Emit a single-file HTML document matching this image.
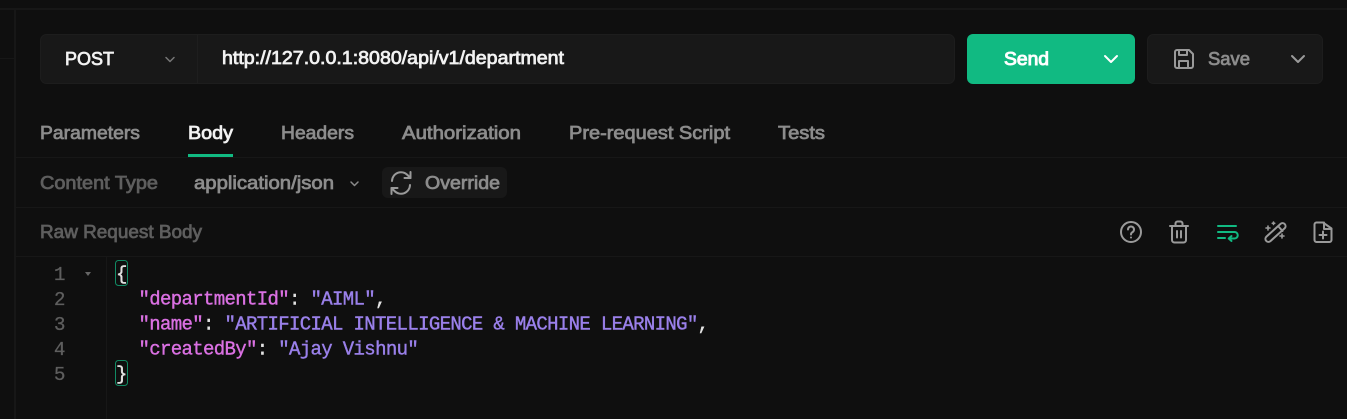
<!DOCTYPE html>
<html><head><meta charset="utf-8"><title>Request</title>
<style>
html,body{margin:0;padding:0;background:#0f0f0f;width:1347px;height:419px;overflow:hidden}
svg{display:block}
text{font-family:"Liberation Sans",sans-serif;font-size:18px}
.b{font-weight:400;stroke-width:.75px}
.m{font-family:"Liberation Mono",monospace;font-size:19px;letter-spacing:-.65px;stroke-width:.4px}
.ln{fill:#5e5e5e;font-family:"Liberation Mono",monospace;font-size:19px;stroke:#5e5e5e;stroke-width:.3px}
.k{fill:#da70e2;stroke:#da70e2}.s{fill:#9a80ea;stroke:#9a80ea}.p{fill:#e2e2e2;stroke:#e2e2e2}
.w{fill:#f2f2f2;stroke:#f2f2f2}.g{fill:#8c8c8c;stroke:#8c8c8c}.d{fill:#5e5e5e;stroke:#5e5e5e}
.i{fill:none;stroke:#9a9a9a;stroke-width:2;stroke-linecap:round;stroke-linejoin:round}
</style></head><body>
<svg width="1347" height="419" viewBox="0 0 1347 419" xmlns="http://www.w3.org/2000/svg">
<rect width="1347" height="419" fill="#0f0f0f"/>
<rect y="8" width="1347" height="2" fill="#171717"/>
<rect x="14" y="10" width="2" height="409" fill="#171717"/>
<rect y="58" width="14" height="1" fill="#171717"/>
<rect x="16" y="157" width="1331" height="1" fill="#171717"/>
<rect x="16" y="207" width="1331" height="1" fill="#171717"/>
<rect x="16" y="256" width="1331" height="1" fill="#171717"/>
<rect x="106" y="257" width="1" height="162" fill="#171717"/>

<rect x="40.500" y="34.500" width="914" height="49" rx="6" fill="#181818" stroke="#1d1d1d"/>
<rect x="197" y="35" width="1" height="48" fill="#1e1e1e"/>
<text x="65" y="65" class="b w" textLength="49" lengthAdjust="spacingAndGlyphs">POST</text>
<path d="M166 57.500l4 4 4-4" fill="none" stroke="#777" stroke-width="1.500" stroke-linecap="round" stroke-linejoin="round"/>
<text x="222" y="64" class="b w" textLength="342" lengthAdjust="spacingAndGlyphs">http://127.0.0.1:8080/api/v1/department</text>

<rect x="967" y="34" width="168" height="50" rx="6" fill="#11ba82"/>
<text x="1004" y="65" class="b" fill="#fff" stroke="#fff" style="stroke-width:.95px" textLength="45" lengthAdjust="spacingAndGlyphs">Send</text>
<path d="M1105 56l6 6 6-6" fill="none" stroke="#fff" stroke-width="2" stroke-linecap="round" stroke-linejoin="round"/>

<rect x="1147.500" y="34.500" width="175" height="49" rx="6" fill="#181818" stroke="#1d1d1d"/>
<g class="i"><path d="M1177 50h12l4 4v12a2 2 0 0 1-2 2h-14a2 2 0 0 1-2-2V52a2 2 0 0 1 2-2z"/><path d="M1179 50v5h8v-5"/><path d="M1179 68v-7h9v7"/></g>
<text x="1208" y="65" class="b g" textLength="42" lengthAdjust="spacingAndGlyphs">Save</text>
<path d="M1292 56l6 6 6-6" fill="none" stroke="#9a9a9a" stroke-width="2" stroke-linecap="round" stroke-linejoin="round"/>

<text x="40" y="139" class="b g" textLength="100" lengthAdjust="spacingAndGlyphs">Parameters</text>
<text x="188" y="139" class="b w" textLength="45" lengthAdjust="spacingAndGlyphs">Body</text>
<rect x="188" y="154" width="45" height="3" fill="#11ba82"/>
<text x="281" y="139" class="b g" textLength="73" lengthAdjust="spacingAndGlyphs">Headers</text>
<text x="402" y="139" class="b g" textLength="119" lengthAdjust="spacingAndGlyphs">Authorization</text>
<text x="569" y="139" class="b g" textLength="161" lengthAdjust="spacingAndGlyphs">Pre-request Script</text>
<text x="778" y="139" class="b g" textLength="47" lengthAdjust="spacingAndGlyphs">Tests</text>

<text x="40" y="189" class="b d" textLength="118" lengthAdjust="spacingAndGlyphs">Content Type</text>
<text x="194" y="189" class="b g" textLength="140" lengthAdjust="spacingAndGlyphs">application/json</text>
<path d="M351 182l3.500 3.500 3.500-3.500" fill="none" stroke="#8a8a8a" stroke-width="1.500" stroke-linecap="round" stroke-linejoin="round"/>
<rect x="382" y="167" width="125" height="31" rx="6" fill="#181818"/>
<g class="i"><path d="M392 181a9 9 0 0 1 15.500-6l3 3"/><path d="M410.500 172v6h-6"/><path d="M410 185a9 9 0 0 1-15.500 6l-3-3"/><path d="M391.500 194v-6h6"/></g>
<text x="425" y="189" class="b g" textLength="75" lengthAdjust="spacingAndGlyphs">Override</text>

<text x="40" y="238" class="b d" textLength="162" lengthAdjust="spacingAndGlyphs">Raw Request Body</text>

<g class="i">
<circle cx="1131" cy="232" r="10"/>
<path d="M1128 229.500a3 3 0 1 1 4.500 2.600c-1 .6-1.500 1.200-1.500 2.400"/>
<path d="M1131 237.500v.01"/>
<path d="M1170 226h18"/><path d="M1175.500 226v-2.500a2 2 0 0 1 2-2h3a2 2 0 0 1 2 2v2.500"/>
<path d="M1172 226v14a2.500 2.500 0 0 0 2.500 2.500h9a2.500 2.500 0 0 0 2.500-2.500v-14"/>
<path d="M1177 231v6.500M1181 231v6.500"/>
<rect x="1263" y="229.500" width="25" height="6" rx="3" transform="rotate(-42 1275.500 232.500)"/>
<path d="M1278.500 226.500l4 4.500"/>
<path d="M1268 226v4M1266 228h4M1282 234v4M1280 236h4M1273.500 222v2.500M1272.250 223.250h2.500" stroke-width="1.600"/>
<path d="M1323 222.500h-6.500a2 2 0 0 0-2 2v15.500a2 2 0 0 0 2 2h13a2 2 0 0 0 2-2v-11.500z"/>
<path d="M1324 222.500v6.500h7.500"/>
<path d="M1323 231.500v7M1319.500 235h7"/>
</g>
<g fill="none" stroke="#11ba82" stroke-width="2" stroke-linecap="round" stroke-linejoin="round">
<path d="M1218 226h18"/><path d="M1218 232h16.500a3 3 0 0 1 0 6.500h-5"/><path d="M1218 238h7"/><path d="M1231.500 236l-2.800 2.500 2.800 2.500"/>
</g>

<text x="54" y="280" class="ln">1</text>
<text x="54" y="305" class="ln">2</text>
<text x="54" y="330" class="ln">3</text>
<text x="54" y="355" class="ln">4</text>
<text x="54" y="380" class="ln">5</text>
<path d="M85 272h6l-3 4z" fill="#666"/>

<rect x="115.500" y="260.500" width="12" height="25" rx="3" fill="none" stroke="#118a63"/>
<rect x="115.500" y="360.500" width="12" height="25" rx="3" fill="none" stroke="#118a63"/>
<text x="116" y="279.500" class="m p">{</text>
<text x="116" y="379.500" class="m p">}</text>
<text x="138.500" y="304.500" class="m" xml:space="preserve"><tspan class="k">"departmentId"</tspan><tspan class="p">: </tspan><tspan class="s">"AIML"</tspan><tspan class="p">,</tspan></text>
<text x="138.500" y="329.500" class="m" xml:space="preserve"><tspan class="k">"name"</tspan><tspan class="p">: </tspan><tspan class="s">"ARTIFICIAL INTELLIGENCE &amp; MACHINE LEARNING"</tspan><tspan class="p">,</tspan></text>
<text x="138.500" y="354.500" class="m" xml:space="preserve"><tspan class="k">"createdBy"</tspan><tspan class="p">: </tspan><tspan class="s">"Ajay Vishnu"</tspan></text>
</svg>
</body></html>
